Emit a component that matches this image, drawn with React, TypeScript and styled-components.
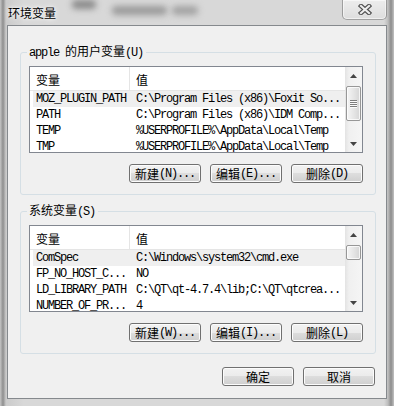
import React from "react";
import styled, { createGlobalStyle } from "styled-components";

const GlobalStyle = createGlobalStyle`
  html, body {
    margin: 0;
    padding: 0;
    background: #d6d6d6;
  }
  body {
    font-family: "Noto Sans CJK SC", "Liberation Sans", sans-serif;
    font-size: 12px;
    color: #000;
  }
`;

const cjk = `"Noto Sans CJK SC", "Liberation Sans", sans-serif`;
const mono = `"Liberation Mono", "Noto Sans CJK SC", monospace`;

const Window = styled.div`
  width: 394px;
  height: 406px;
  box-sizing: border-box;
  padding: 0 7px 7px 7px;
  display: flex;
  flex-direction: column;
  background: linear-gradient(
    90deg,
    #c6c6c6 0px,
    #8e8e8e 3px,
    #cbcbcb 6px,
    #d8d8d8 24px,
    #d8d8d8 384px,
    #bdbdbd 388px,
    #8c8c8c 391px,
    #c2c2c2 394px
  );
`;

const TitleBar = styled.div`
  height: 29px;
  display: flex;
  align-items: center;
  padding-left: 1px;
`;

const Title = styled.span`
  font-family: ${cjk};
  font-size: 12px;
  line-height: 14px;
  color: #000;
  text-shadow: 0 0 6px #fff, 0 0 3px #fff;
`;

const Smudge = styled.div<{ $w: number; $ml: number; $tone: string; $dy: number }>`
  width: ${(p) => p.$w}px;
  height: 9px;
  margin-left: ${(p) => p.$ml}px;
  margin-top: ${(p) => p.$dy}px;
  background: ${(p) => p.$tone};
  border-radius: 4px;
  filter: blur(3px);
`;

const CloseButton = styled.div`
  margin-left: auto;
  align-self: flex-start;
  width: 45px;
  height: 20px;
  box-sizing: border-box;
  border: 1px solid rgba(70, 70, 70, 0.45);
  border-top: none;
  border-radius: 0 0 5px 5px;
  background: linear-gradient(rgba(255, 255, 255, 0.55), rgba(255, 255, 255, 0.15));
  box-shadow: inset 0 0 0 1px rgba(255, 255, 255, 0.55);
  display: flex;
  align-items: center;
  justify-content: center;
`;

const Client = styled.div`
  flex: 1;
  border: 1px solid #85898d;
  background: #f0f0f0;
  display: flex;
  flex-direction: column;
  padding: 18px 10px 12px 12px;
`;

const Group = styled.fieldset`
  margin: 0;
  padding: 6px 12px 11px 8px;
  border: 1px solid #d5dfe5;
  border-radius: 3px;
  min-inline-size: 0;
  display: flex;
  flex-direction: column;
  & + & {
    margin-top: 8px;
  }
`;

const Legend = styled.legend`
  padding: 0 3px 0 2px;
  margin-left: -2px;
  font-family: ${cjk};
  font-size: 12px;
  line-height: 14px;
`;

const Latin = styled.span`
  font-family: ${mono};
  font-size: 12px;
  letter-spacing: -1.2px;
`;

const ListView = styled.div`
  height: 87px;
  box-sizing: border-box;
  border: 1px solid #828790;
  background: #fff;
  display: flex;
`;

const ListBody = styled.div`
  flex: 1;
  overflow: hidden;
  display: flex;
  flex-direction: column;
`;

const Header = styled.div`
  flex: none;
  height: 24px;
  box-sizing: border-box;
  border-bottom: 1px solid #e5e5e5;
  display: grid;
  grid-template-columns: 100px 1fr;
`;

const HeaderCell = styled.div`
  display: flex;
  align-items: center;
  padding: 1px 0 0 6px;
  font-family: ${cjk};
  font-size: 12px;
  &:first-child {
    border-right: 1px solid #e5e5e5;
  }
`;

const Row = styled.div<{ $hot?: boolean }>`
  flex: none;
  height: 16px;
  margin-left: 3px;
  display: grid;
  grid-template-columns: 97px 1fr;
  background: ${(p) => (p.$hot ? "#efefef" : "transparent")};
`;

const Cell = styled.div`
  font-family: ${mono};
  font-size: 12px;
  letter-spacing: -1.2px;
  line-height: 16px;
  white-space: nowrap;
  overflow: hidden;
  padding-left: 6px;
  &:first-child {
    padding-left: 3px;
  }
`;

const ScrollBar = styled.div`
  width: 17px;
  flex: none;
  display: flex;
  flex-direction: column;
  background: linear-gradient(90deg, #e3e3e3 0px, #f0f0f0 4px, #f5f5f5 100%);
`;

const ArrowButton = styled.div`
  height: 17px;
  flex: none;
  display: flex;
  align-items: center;
  justify-content: center;
`;

const Track = styled.div`
  flex: 1;
  display: flex;
  flex-direction: column;
`;

const Thumb = styled.div<{ $top: number; $h: number }>`
  margin: ${(p) => p.$top}px 1px 0 1px;
  height: ${(p) => p.$h}px;
  box-sizing: border-box;
  border: 1px solid #979797;
  border-radius: 2px;
  background: linear-gradient(90deg, #f5f5f5 0%, #e6e6e6 50%, #d5d5d5 100%);
  box-shadow: inset 0 0 0 1px rgba(255, 255, 255, 0.75);
  display: flex;
  align-items: center;
  justify-content: center;
`;

const ButtonRow = styled.div`
  display: flex;
  justify-content: flex-end;
  gap: 9px;
  margin-top: 11px;
`;

const DialogButtons = styled(ButtonRow)`
  margin-top: 13px;
  margin-right: 1px;
`;

const Button = styled.button`
  width: 72px;
  height: 19px;
  padding: 0;
  box-sizing: border-box;
  border: 1px solid #707070;
  border-radius: 3px;
  background: linear-gradient(#f2f2f2 0%, #ebebeb 50%, #dddddd 50%, #cfcfcf 100%);
  box-shadow: inset 0 0 0 1px #fcfcfc;
  font-family: ${cjk};
  font-size: 12px;
  line-height: 16px;
  color: #000;
  display: flex;
  align-items: center;
  justify-content: center;
`;

type Entry = [string, string];

const userVars: Entry[] = [
  ["MOZ_PLUGIN_PATH", "C:\\Program Files (x86)\\Foxit So..."],
  ["PATH", "C:\\Program Files (x86)\\IDM Comp..."],
  ["TEMP", "%USERPROFILE%\\AppData\\Local\\Temp"],
  ["TMP", "%USERPROFILE%\\AppData\\Local\\Temp"],
];

const systemVars: Entry[] = [
  ["ComSpec", "C:\\Windows\\system32\\cmd.exe"],
  ["FP_NO_HOST_C...", "NO"],
  ["LD_LIBRARY_PATH", "C:\\QT\\qt-4.7.4\\lib;C:\\QT\\qtcrea..."],
  ["NUMBER_OF_PR...", "4"],
];

const UpArrow = () => (
  <svg width="7" height="4" viewBox="0 0 7 4">
    <path d="M3.5 0 L7 4 L0 4 Z" fill="#444" />
  </svg>
);

const DownArrow = () => (
  <svg width="7" height="4" viewBox="0 0 7 4">
    <path d="M0 0 L7 0 L3.5 4 Z" fill="#444" />
  </svg>
);

const Grip = () => (
  <svg width="7" height="8" viewBox="0 0 7 8">
    {[0, 2, 4, 6].map((y) => (
      <g key={y}>
        <rect x="0" y={y} width="7" height="1" fill="#7d7d7d" />
        <rect x="0" y={y + 1} width="7" height="1" fill="#fafafa" />
      </g>
    ))}
  </svg>
);

const CloseGlyph = () => (
  <svg width="14" height="11" viewBox="0 0 14 11">
    <path d="M3 2 L11 9 M11 2 L3 9" stroke="#4f4f4f" strokeWidth="4.4" strokeLinecap="square" />
    <path d="M3 2 L11 9 M11 2 L3 9" stroke="#eeeeee" strokeWidth="2.2" strokeLinecap="square" />
  </svg>
);

interface VarListProps {
  rows: Entry[];
  thumbTop: number;
  thumbHeight: number;
  grip?: boolean;
}

const VarList = ({ rows, thumbTop, thumbHeight, grip }: VarListProps) => (
  <ListView>
    <ListBody>
      <Header>
        <HeaderCell>变量</HeaderCell>
        <HeaderCell>值</HeaderCell>
      </Header>
      {rows.map(([name, value], i) => (
        <Row key={name} $hot={i === 0}>
          <Cell>{name}</Cell>
          <Cell>{value}</Cell>
        </Row>
      ))}
    </ListBody>
    <ScrollBar>
      <ArrowButton>
        <UpArrow />
      </ArrowButton>
      <Track>
        <Thumb $top={thumbTop} $h={thumbHeight}>
          {grip && <Grip />}
        </Thumb>
      </Track>
      <ArrowButton>
        <DownArrow />
      </ArrowButton>
    </ScrollBar>
  </ListView>
);

const App = () => {
  return (
    <>
      <GlobalStyle />
      <Window>
        <TitleBar>
          <Title>环境变量</Title>
          <Smudge $w={24} $ml={16} $tone="#8a8a8a" $dy={-16} />
          <Smudge $w={55} $ml={16} $tone="#9a9a9a" $dy={-4} />
          <Smudge $w={26} $ml={5} $tone="#a2a2a2" $dy={-4} />
          <CloseButton>
            <CloseGlyph />
          </CloseButton>
        </TitleBar>
        <Client>
          <Group>
            <Legend>
              <Latin>apple </Latin>的用户变量<Latin>(U)</Latin>
            </Legend>
            <VarList rows={userVars} thumbTop={2} thumbHeight={35} grip />
            <ButtonRow>
              <Button>
                新建<Latin>(N)...</Latin>
              </Button>
              <Button>
                编辑<Latin>(E)...</Latin>
              </Button>
              <Button>
                删除<Latin>(D)</Latin>
              </Button>
            </ButtonRow>
          </Group>
          <Group>
            <Legend>
              系统变量<Latin>(S)</Latin>
            </Legend>
            <VarList rows={systemVars} thumbTop={2} thumbHeight={15} />
            <ButtonRow>
              <Button>
                新建<Latin>(W)...</Latin>
              </Button>
              <Button>
                编辑<Latin>(I)...</Latin>
              </Button>
              <Button>
                删除<Latin>(L)</Latin>
              </Button>
            </ButtonRow>
          </Group>
          <DialogButtons>
            <Button>确定</Button>
            <Button>取消</Button>
          </DialogButtons>
        </Client>
      </Window>
    </>
  );
};

export default App;
